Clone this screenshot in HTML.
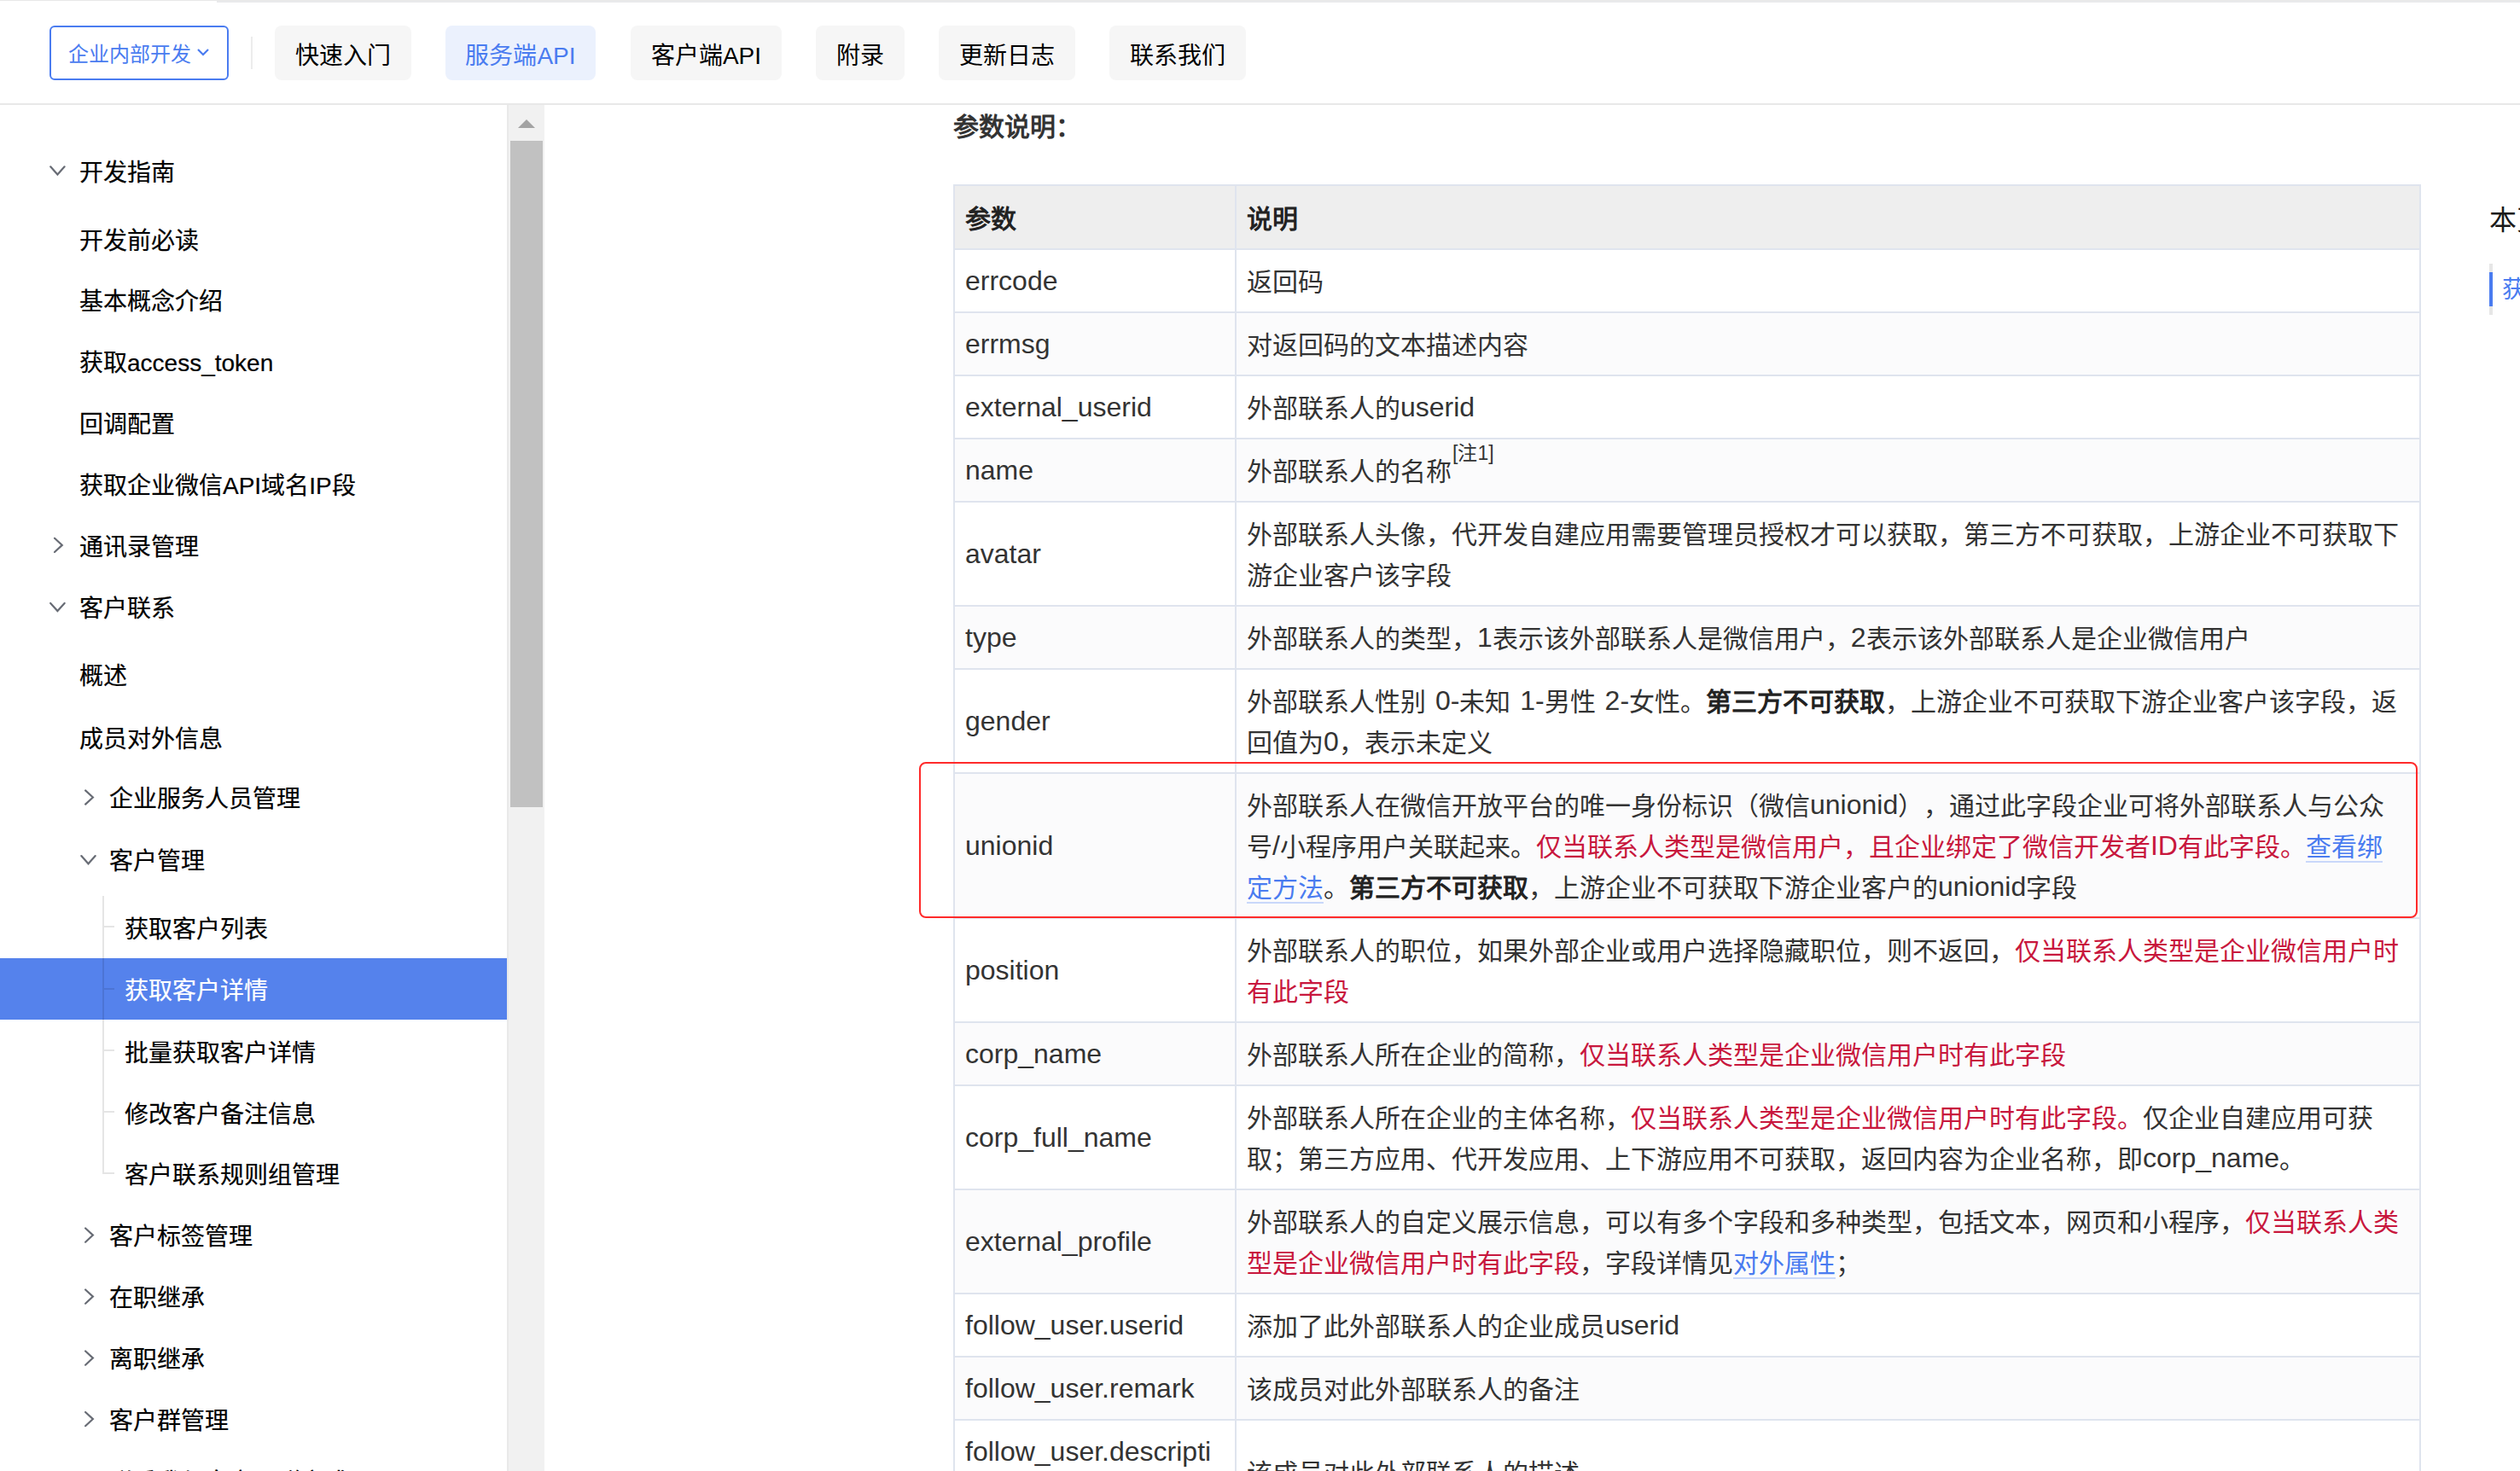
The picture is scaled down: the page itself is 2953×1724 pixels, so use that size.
<!DOCTYPE html><html lang="zh-CN"><head><meta charset="utf-8"><style>
*{box-sizing:border-box;margin:0;padding:0}
html,body{width:2953px;height:1724px;overflow:hidden;background:#fff;font-family:"Liberation Sans",sans-serif;text-spacing-trim:space-all}
.abs{position:absolute}
.nb{position:absolute;top:30px;height:64px;border-radius:8px;background:#f6f6f6;color:#000;font-size:28px;line-height:65px;padding-top:3px;text-align:center;white-space:nowrap}
.sb{position:absolute;white-space:nowrap;font-size:28px;line-height:72px;height:72px;color:#000;-webkit-text-stroke:0.2px currentColor}
.chev{position:absolute}
.row{position:absolute;left:1117px;width:1720px;border-top:2px solid #dfe4ee;border-left:2px solid #dfe4ee;border-right:2px solid #dfe4ee}
.c1{position:absolute;left:0;top:0;bottom:0;width:330px;border-right:2px solid #dfe4ee;display:flex;align-items:center;padding-left:12px;font-size:32px;line-height:48px;color:#333;white-space:nowrap}
.c2{position:absolute;left:332px;top:0;bottom:0;right:0;display:flex;align-items:center;padding-left:10px;padding-top:4px;font-size:30px;line-height:48px;color:#333;white-space:nowrap}
.L{font-size:32px;line-height:0;position:relative;top:-1px}
.red{color:#c8173d}
.lnk{color:#4a7cf0;border-bottom:2px solid #c9d8fa}
b{font-weight:bold;color:#222}
sup{font-size:23px;line-height:0;vertical-align:top;position:relative;top:2px;margin-left:1px}
</style></head><body><div class="abs" style="left:0;top:0;width:2953px;height:1px;background:#e8e8e8"></div>
<div class="abs" style="left:254px;top:1px;width:2699px;height:2px;background:#e9eaec"></div>
<div class="abs" style="left:0;top:121px;width:2953px;height:2px;background:#e8e8e8"></div>
<div class="abs" style="left:58px;top:30px;width:210px;height:64px;border:2px solid #4a7cf0;border-radius:6px"></div>
<div class="abs" style="left:80px;top:32px;height:64px;line-height:64px;font-size:24px;color:#4a7cf0;white-space:nowrap">企业内部开发</div>
<svg class="abs" style="left:229px;top:54px" width="18" height="14" viewBox="0 0 18 14"><path d="M3 4 L9 10 L15 4" fill="none" stroke="#4a7cf0" stroke-width="2.2"/></svg>
<div class="abs" style="left:294px;top:43px;width:2px;height:38px;background:#ececec"></div>
<div class="nb" style="left:322px;width:160px;">快速入门</div>
<div class="nb" style="left:522px;width:176px;background:#ebf1fd;color:#4a7cf0;">服务端<span style="font-size:28px">API</span></div>
<div class="nb" style="left:739px;width:177px;">客户端API</div>
<div class="nb" style="left:956px;width:104px;">附录</div>
<div class="nb" style="left:1100px;width:160px;">更新日志</div>
<div class="nb" style="left:1300px;width:160px;">联系我们</div>
<div class="abs" style="left:0;top:1123px;width:594px;height:72px;background:#5582ec"></div>
<div class="abs" style="left:120px;top:1050px;width:2px;height:326px;background:rgba(0,0,0,0.1)"></div>
<div class="abs" style="left:122px;top:1085px;width:12px;height:2px;background:rgba(0,0,0,0.1)"></div>
<div class="abs" style="left:122px;top:1158px;width:12px;height:2px;background:rgba(0,0,0,0.1)"></div>
<div class="abs" style="left:122px;top:1230px;width:12px;height:2px;background:rgba(0,0,0,0.1)"></div>
<div class="abs" style="left:122px;top:1302px;width:12px;height:2px;background:rgba(0,0,0,0.1)"></div>
<div class="abs" style="left:122px;top:1374px;width:12px;height:2px;background:rgba(0,0,0,0.1)"></div>
<div class="sb" style="left:93px;top:167.2px;color:#000">开发指南</div>
<div class="sb" style="left:93px;top:246.7px;color:#000">开发前必读</div>
<div class="sb" style="left:93px;top:318.2px;color:#000">基本概念介绍</div>
<div class="sb" style="left:93px;top:390.0px;color:#000">获取access_token</div>
<div class="sb" style="left:93px;top:462.4px;color:#000">回调配置</div>
<div class="sb" style="left:93px;top:534.1px;color:#000">获取企业微信API域名IP段</div>
<div class="sb" style="left:93px;top:605.7px;color:#000">通讯录管理</div>
<div class="sb" style="left:93px;top:677.7px;color:#000">客户联系</div>
<div class="sb" style="left:93px;top:757.4px;color:#000">概述</div>
<div class="sb" style="left:93px;top:830.7px;color:#000">成员对外信息</div>
<div class="sb" style="left:128px;top:900.7px;color:#000">企业服务人员管理</div>
<div class="sb" style="left:128px;top:973.7px;color:#000">客户管理</div>
<div class="sb" style="left:146px;top:1053.7px;color:#000">获取客户列表</div>
<div class="sb" style="left:146px;top:1125.7px;color:#fff">获取客户详情</div>
<div class="sb" style="left:146px;top:1198.7px;color:#000">批量获取客户详情</div>
<div class="sb" style="left:146px;top:1270.7px;color:#000">修改客户备注信息</div>
<div class="sb" style="left:146px;top:1341.7px;color:#000">客户联系规则组管理</div>
<div class="sb" style="left:128px;top:1414.2px;color:#000">客户标签管理</div>
<div class="sb" style="left:128px;top:1486.2px;color:#000">在职继承</div>
<div class="sb" style="left:128px;top:1558.2px;color:#000">离职继承</div>
<div class="sb" style="left:128px;top:1629.7px;color:#000">客户群管理</div>
<div class="sb" style="left:128px;top:1701.7px;color:#000">联系我与客户入群方式</div>
<svg class="abs" style="left:0;top:0" width="640" height="1724" viewBox="0 0 640 1724"><path d="M59.2 195.3 L67.4 204.5 L75.60000000000001 195.3 M64 630.8 L72.8 638.9 L64 647.0 M59.2 706.9 L67.4 716.1 L75.60000000000001 706.9 M100.1 926.4 L108.89999999999999 934.5 L100.1 942.6 M95.3 1003.0999999999999 L103.5 1012.3 L111.7 1003.0999999999999 M100.1 1439.5 L108.89999999999999 1447.6 L100.1 1455.6999999999998 M100.1 1511.5 L108.89999999999999 1519.6 L100.1 1527.6999999999998 M100.1 1583.5 L108.89999999999999 1591.6 L100.1 1599.6999999999998 M100.1 1655.0 L108.89999999999999 1663.1 L100.1 1671.1999999999998 M100.1 1727.0 L108.89999999999999 1735.1 L100.1 1743.1999999999998" fill="none" stroke="#686c75" stroke-width="2.2" stroke-linecap="round" stroke-linejoin="miter"/></svg>
<div class="abs" style="left:594px;top:123px;width:44px;height:1601px;background:#f1f1f1;border-left:2px solid #e9e9e9"></div>
<svg class="abs" style="left:606px;top:139px" width="22" height="12" viewBox="0 0 22 12"><path d="M1 11 L11 1 L21 11 Z" fill="#a3a3a3"/></svg>
<div class="abs" style="left:598px;top:165px;width:38px;height:781px;background:#c1c1c1"></div>
<div class="abs" style="left:1117px;top:125px;height:48px;line-height:48px;font-size:30px;font-weight:bold;color:#333;white-space:nowrap">参数说明：</div>
<div class="row" style="top:216px;height:75px;background:#eeeeee"><div class="c1" style="font-size:30px;font-weight:bold;color:#222;padding-top:4px">参数</div><div class="c2" style="font-weight:bold;color:#222">说明</div></div>
<div class="row" style="top:291px;height:74px;background:#ffffff"><div class="c1">errcode</div><div class="c2"><div>返回码</div></div></div>
<div class="row" style="top:365px;height:74px;background:#fbfbfc"><div class="c1">errmsg</div><div class="c2"><div>对返回码的文本描述内容</div></div></div>
<div class="row" style="top:439px;height:74px;background:#ffffff"><div class="c1">external_userid</div><div class="c2"><div>外部联系人的<span class="L">userid</span></div></div></div>
<div class="row" style="top:513px;height:74px;background:#fbfbfc"><div class="c1">name</div><div class="c2"><div>外部联系人的名称<sup>[注1]</sup></div></div></div>
<div class="row" style="top:587px;height:122px;background:#ffffff"><div class="c1">avatar</div><div class="c2"><div>外部联系人头像，代开发自建应用需要管理员授权才可以获取，第三方不可获取，上游企业不可获取下<br>游企业客户该字段</div></div></div>
<div class="row" style="top:709px;height:74px;background:#fbfbfc"><div class="c1">type</div><div class="c2"><div>外部联系人的类型，<span class="L">1</span>表示该外部联系人是微信用户，<span class="L">2</span>表示该外部联系人是企业微信用户</div></div></div>
<div class="row" style="top:783px;height:122px;background:#ffffff"><div class="c1">gender</div><div class="c2"><div>外部联系人性别<span class="L" style="word-spacing:2px"> 0-</span>未知<span class="L" style="word-spacing:2px"> 1-</span>男性<span class="L" style="word-spacing:2px"> 2-</span>女性。<b>第三方不可获取</b>，上游企业不可获取下游企业客户该字段，返<br>回值为<span class="L">0</span>，表示未定义</div></div></div>
<div class="row" style="top:905px;height:170px;background:#fbfbfc"><div class="c1">unionid</div><div class="c2"><div>外部联系人在微信开放平台的唯一身份标识（微信<span class="L">unionid</span>），通过此字段企业可将外部联系人与公众<br>号<span class="L">/</span>小程序用户关联起来。<span class="red">仅当联系人类型是微信用户，且企业绑定了微信开发者<span class="L">ID</span>有此字段。</span><span class="lnk">查看绑</span><br><span class="lnk">定方法</span>。<b>第三方不可获取</b>，上游企业不可获取下游企业客户的<span class="L">unionid</span>字段</div></div></div>
<div class="row" style="top:1075px;height:122px;background:#ffffff"><div class="c1">position</div><div class="c2"><div>外部联系人的职位，如果外部企业或用户选择隐藏职位，则不返回，<span class="red">仅当联系人类型是企业微信用户时</span><br><span class="red">有此字段</span></div></div></div>
<div class="row" style="top:1197px;height:74px;background:#fbfbfc"><div class="c1">corp_name</div><div class="c2"><div>外部联系人所在企业的简称，<span class="red">仅当联系人类型是企业微信用户时有此字段</span></div></div></div>
<div class="row" style="top:1271px;height:122px;background:#ffffff"><div class="c1">corp_full_name</div><div class="c2"><div>外部联系人所在企业的主体名称，<span class="red">仅当联系人类型是企业微信用户时有此字段。</span>仅企业自建应用可获<br>取；第三方应用、代开发应用、上下游应用不可获取，返回内容为企业名称，即<span class="L">corp_name</span>。</div></div></div>
<div class="row" style="top:1393px;height:122px;background:#fbfbfc"><div class="c1">external_profile</div><div class="c2"><div>外部联系人的自定义展示信息，可以有多个字段和多种类型，包括文本，网页和小程序，<span class="red">仅当联系人类</span><br><span class="red">型是企业微信用户时有此字段</span>，字段详情见<span class="lnk">对外属性</span>；</div></div></div>
<div class="row" style="top:1515px;height:74px;background:#ffffff"><div class="c1">follow_user.userid</div><div class="c2"><div>添加了此外部联系人的企业成员<span class="L">userid</span></div></div></div>
<div class="row" style="top:1589px;height:74px;background:#fbfbfc"><div class="c1">follow_user.remark</div><div class="c2"><div>该成员对此外部联系人的备注</div></div></div>
<div class="row" style="top:1663px;height:122px;background:#ffffff"><div class="c1">follow_user.descripti<br>on</div><div class="c2"><div>该成员对此外部联系人的描述</div></div></div>
<div class="abs" style="left:1077px;top:893px;width:1756px;height:183px;border:2px solid #ff2a2a;border-radius:8px"></div>
<div class="abs" style="left:2917px;top:234px;height:48px;line-height:48px;font-size:32px;color:#1a1a1a;white-space:nowrap">本页目录</div>
<div class="abs" style="left:2917px;top:309px;width:4px;height:60px;background:#e6e6e6"></div>
<div class="abs" style="left:2917px;top:319px;width:4px;height:40px;background:#4a7cf0"></div>
<div class="abs" style="left:2932px;top:316px;height:48px;line-height:48px;font-size:28px;color:#4a7cf0;white-space:nowrap">获取客户详情</div></body></html>
